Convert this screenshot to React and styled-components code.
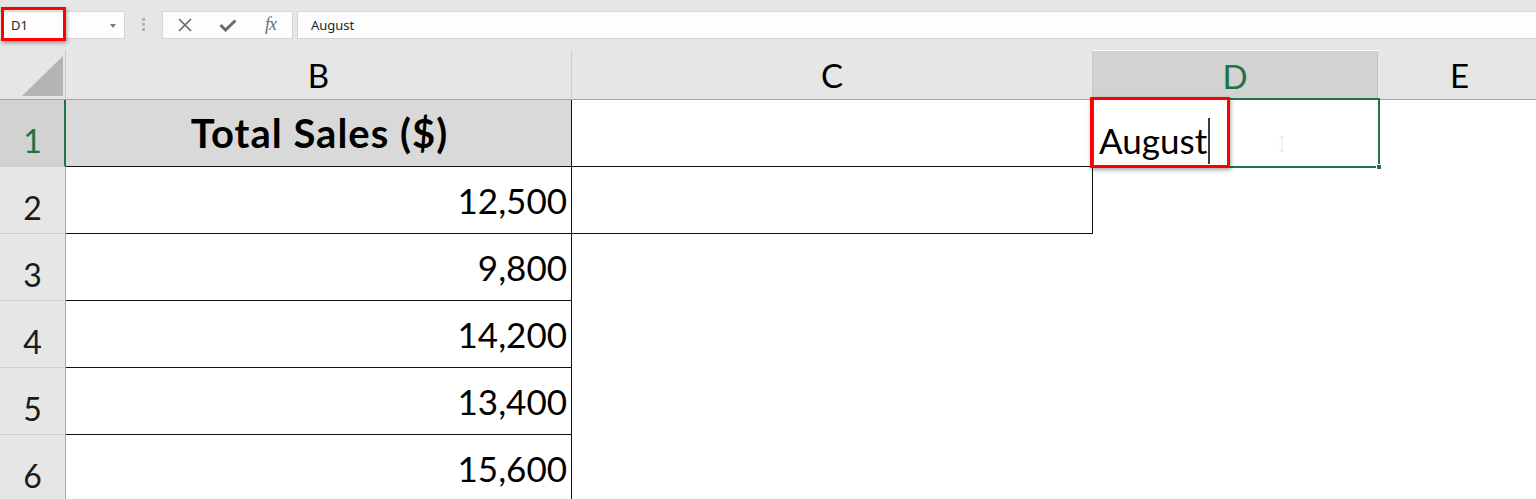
import React from "react";
import styled, { createGlobalStyle } from "styled-components";

const GlobalStyle = createGlobalStyle`
  html, body { margin: 0; padding: 0; background: #ffffff; }
  body { overflow: hidden; }
  * { box-sizing: border-box; }
`;

const GREEN = "#217346";
const RED = "#ff0000";

const Page = styled.div`
  width: 1536px;
  height: 499px;
  overflow: hidden;
  background: #ffffff;
  font-family: "Lato", "Noto Sans", sans-serif;
`;

const FormulaBar = styled.div`
  height: 50px;
  background: #e6e6e6;
  display: flex;
  align-items: flex-start;
  padding-top: 11px;
`;

const NameBox = styled.div`
  position: relative;
  width: 125px;
  height: 28px;
  background: #fdfdfd;
  border: 1px solid #d6d6d6;
  border-left: none;
  display: flex;
  align-items: center;
  justify-content: space-between;
  padding: 0 8px 0 11px;
  font-family: "Noto Sans", "Open Sans", sans-serif;
  font-size: 13px;
  color: #262626;
`;

const DropArrow = styled.span`
  width: 0;
  height: 0;
  border-left: 3.5px solid transparent;
  border-right: 3.5px solid transparent;
  border-top: 4px solid #7a7a7a;
  margin-top: 1px;
`;

const Annotation = styled.div`
  position: absolute;
  z-index: 3;
  border: 3px solid ${RED};
  box-shadow: 1px 2px 4px rgba(0, 0, 0, 0.35);
  pointer-events: none;
`;

const NameAnnotation = styled(Annotation)`
  left: 1px;
  top: -5px;
  width: 65px;
  height: 34px;
`;

const Grip = styled.div`
  width: 3px;
  margin: 7px 16px 0 17px;
  display: flex;
  flex-direction: column;
  gap: 2px;
`;

const GripDot = styled.span`
  width: 3px;
  height: 3px;
  background: #b3b3b3;
`;

const ButtonsBox = styled.div`
  width: 131px;
  height: 28px;
  margin-left: 1px;
  background: #fdfdfd;
  border: 1px solid #d6d6d6;
  display: grid;
  grid-template-columns: repeat(3, 1fr);
  align-items: center;
  justify-items: center;
  margin-right: 4px;
`;

const FxLabel = styled.span`
  font-family: "Liberation Serif", "DejaVu Serif", serif;
  font-style: italic;
  font-size: 18px;
  color: #6f6f6f;
  line-height: 1;
  margin-top: -2px;
  letter-spacing: -1px;
`;

const FormulaInput = styled.div`
  flex: 1;
  height: 28px;
  background: #fdfdfd;
  border: 1px solid #d6d6d6;
  border-right: none;
  display: flex;
  align-items: center;
  padding-left: 13px;
  font-family: "Noto Sans", "Open Sans", sans-serif;
  font-size: 13px;
  color: #262626;
`;

const Sheet = styled.div`
  display: grid;
  grid-template-columns: 66px 506px 521px 285px 164px;
  grid-template-rows: 50px repeat(6, 67px);
`;

const Corner = styled.div`
  background: #e6e6e6;
  border-right: 1px solid #c9c9c9;
  border-bottom: 1px solid #a3a3a3;
  display: flex;
  align-items: flex-end;
  justify-content: flex-end;
  padding: 0 2px 3px 0;
`;

const ColHeader = styled.div`
  background: ${(p) => (p.$active ? "#d2d2d2" : "#e6e6e6")};
  color: ${(p) => (p.$active ? GREEN : "#000000")};
  border-right: 1px solid ${(p) => (p.$active ? "#c2c2c2" : "#cdcdcd")};
  border-bottom: 1px solid #a3a3a3;
  margin-top: ${(p) => (p.$active ? "1px" : "0")};
  display: flex;
  align-items: center;
  justify-content: center;
  font-size: 33px;
  line-height: 1;
  padding-top: 2px;
`;

const RowHeader = styled.div`
  background: ${(p) => (p.$active ? "#d2d2d2" : "#e6e6e6")};
  color: ${(p) => (p.$active ? GREEN : "#1a1a1a")};
  border-right: ${(p) => (p.$active ? `2px solid ${GREEN}` : "1px solid #a9a9a9")};
  border-bottom: 1px solid #cfcfcf;
  display: flex;
  align-items: flex-end;
  justify-content: center;
  padding-bottom: 9px;
  padding-left: ${(p) => (p.$active ? "1px" : "0")};
  font-size: 32px;
  line-height: 1;
`;

const Cell = styled.div`
  position: relative;
  z-index: ${(p) => (p.$selected ? 2 : 0)};
  background: ${(p) => p.$fill || "#ffffff"};
  border-right: ${(p) => (p.$right ? "1px solid #111" : "none")};
  border-bottom: ${(p) => (p.$bottom ? "1px solid #111" : "none")};
  display: flex;
  align-items: ${(p) => (p.$center ? "center" : "flex-end")};
  justify-content: ${(p) =>
    p.$center ? "center" : p.$num ? "flex-end" : "flex-start"};
  padding: ${(p) => (p.$center ? "0 0 0 2px" : p.$num ? "0 4px 15px 0" : "0 0 9px 6px")};
  font-size: ${(p) => (p.$center ? "40px" : "35px")};
  letter-spacing: ${(p) => (p.$center ? "1px" : "0")};
  font-weight: ${(p) => (p.$center ? 700 : 400)};
  line-height: 1;
  color: #000000;
`;

const Editing = styled.span`
  position: relative;
`;

const Caret = styled.span`
  position: absolute;
  right: -3px;
  bottom: -6px;
  width: 2px;
  height: 46px;
  background: #3a3a3a;
`;

const SelectionFrame = styled.div`
  position: absolute;
  z-index: 2;
  left: -1px;
  top: -2px;
  right: -2px;
  bottom: -1px;
  border: 2px solid ${GREEN};
  pointer-events: none;
`;

const FillHandle = styled.span`
  position: absolute;
  right: -4px;
  bottom: -4px;
  width: 6px;
  height: 6px;
  background: ${GREEN};
  border: 1px solid #ffffff;
`;

const CellAnnotation = styled(Annotation)`
  left: -3px;
  top: -3px;
  width: 140px;
  height: 71px;
`;

const IBeam = styled.svg`
  position: absolute;
  left: 185px;
  top: 36px;
`;

const Triangle = () => (
  <svg width="41" height="40" viewBox="0 0 41 40">
    <polygon points="41,0 41,40 0,40" fill="#b4b4b4" />
  </svg>
);

const CancelIcon = () => (
  <svg width="16" height="14" viewBox="0 0 16 14">
    <path d="M2 1 L14 13 M14 1 L2 13" stroke="#6b6b6b" strokeWidth="1.7" fill="none" />
  </svg>
);

const CheckIcon = () => (
  <svg width="18" height="13" viewBox="0 0 18 13">
    <path d="M1.5 6 L6.5 11 L16.5 1.5" stroke="#6b6b6b" strokeWidth="3" fill="none" strokeLinejoin="miter" />
  </svg>
);

const rows = [
  { n: 1, b: "Total Sales ($)" },
  { n: 2, b: "12,500" },
  { n: 3, b: "9,800" },
  { n: 4, b: "14,200" },
  { n: 5, b: "13,400" },
  { n: 6, b: "15,600" },
];

export default function App() {
  return (
    <Page>
      <GlobalStyle />
      <FormulaBar>
        <NameBox>
          <span>D1</span>
          <DropArrow />
          <NameAnnotation />
        </NameBox>
        <Grip>
          <GripDot />
          <GripDot />
          <GripDot />
        </Grip>
        <ButtonsBox>
          <CancelIcon />
          <CheckIcon />
          <FxLabel>fx</FxLabel>
        </ButtonsBox>
        <FormulaInput>August</FormulaInput>
      </FormulaBar>
      <Sheet>
        <Corner>
          <Triangle />
        </Corner>
        <ColHeader>B</ColHeader>
        <ColHeader>C</ColHeader>
        <ColHeader $active>D</ColHeader>
        <ColHeader>E</ColHeader>
        {rows.map((r) => (
          <React.Fragment key={r.n}>
            <RowHeader $active={r.n === 1}>{r.n}</RowHeader>
            {r.n === 1 ? (
              <Cell $fill="#d9d9d9" $right $bottom $center>
                {r.b}
              </Cell>
            ) : (
              <Cell $right $bottom $num>
                {r.b}
              </Cell>
            )}
            <Cell $right={r.n <= 2} $bottom={r.n <= 2} />
            {r.n === 1 ? (
              <Cell $selected>
                <Editing>
                  August
                  <Caret />
                </Editing>
                <SelectionFrame>
                  <FillHandle />
                </SelectionFrame>
                <CellAnnotation />
                <IBeam width="8" height="16" viewBox="0 0 8 16">
                  <path d="M1 1 H7 M4 1 V15 M1 15 H7" stroke="#e4e4e4" strokeWidth="1" fill="none" />
                </IBeam>
              </Cell>
            ) : (
              <Cell />
            )}
            <Cell />
          </React.Fragment>
        ))}
      </Sheet>
    </Page>
  );
}
